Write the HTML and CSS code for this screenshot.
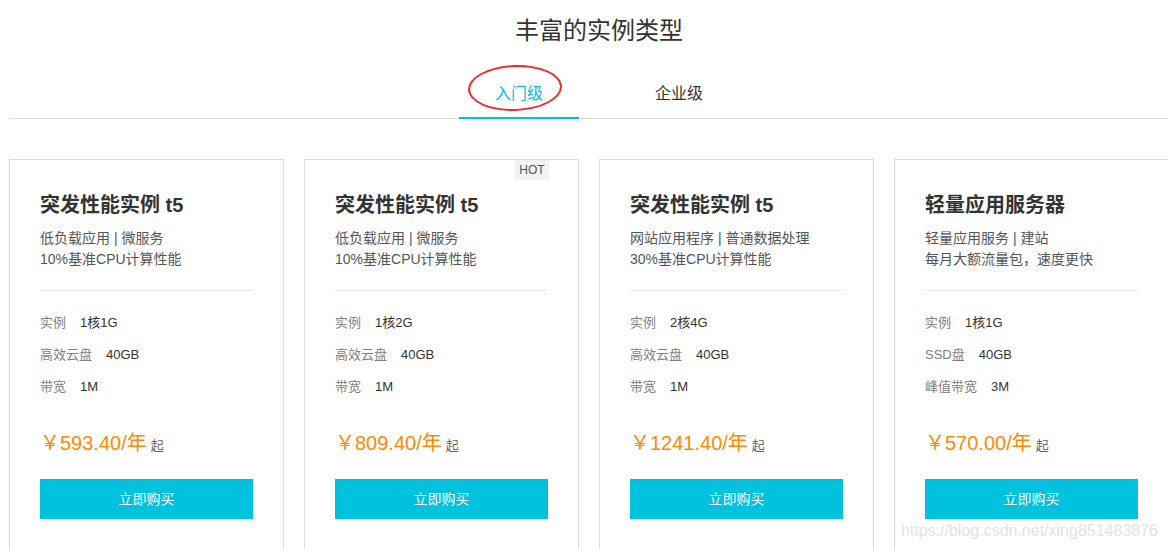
FILE: index.html
```html
<!DOCTYPE html>
<html lang="zh-CN">
<head>
<meta charset="utf-8">
<title>丰富的实例类型</title>
<link rel="stylesheet" href="styles.css">
</head>
<body>
<div class="wrap">
  <h2 class="heading">丰富的实例类型</h2>
  <div class="tabs">
    <div class="tab active">入门级</div>
    <div class="tab">企业级</div>
    <span class="mark"></span>
  </div>
  <div class="cards">
    <div class="card">
      <h3 class="card-title">突发性能实例 t5</h3>
      <p class="desc">低负载应用 | 微服务<br>10%基准CPU计算性能</p>
      <div class="divider"></div>
      <ul class="specs">
        <li><span class="label">实例</span><span class="val">1核1G</span></li>
        <li><span class="label">高效云盘</span><span class="val">40GB</span></li>
        <li><span class="label">带宽</span><span class="val">1M</span></li>
      </ul>
      <div class="price"><span class="yen">￥</span>593.40/年<span class="from">起</span></div>
      <div class="buy">立即购买</div>
    </div>
    <div class="card">
      <span class="hot">HOT</span>
      <h3 class="card-title">突发性能实例 t5</h3>
      <p class="desc">低负载应用 | 微服务<br>10%基准CPU计算性能</p>
      <div class="divider"></div>
      <ul class="specs">
        <li><span class="label">实例</span><span class="val">1核2G</span></li>
        <li><span class="label">高效云盘</span><span class="val">40GB</span></li>
        <li><span class="label">带宽</span><span class="val">1M</span></li>
      </ul>
      <div class="price"><span class="yen">￥</span>809.40/年<span class="from">起</span></div>
      <div class="buy">立即购买</div>
    </div>
    <div class="card">
      <h3 class="card-title">突发性能实例 t5</h3>
      <p class="desc">网站应用程序 | 普通数据处理<br>30%基准CPU计算性能</p>
      <div class="divider"></div>
      <ul class="specs">
        <li><span class="label">实例</span><span class="val">2核4G</span></li>
        <li><span class="label">高效云盘</span><span class="val">40GB</span></li>
        <li><span class="label">带宽</span><span class="val">1M</span></li>
      </ul>
      <div class="price"><span class="yen">￥</span>1241.40/年<span class="from">起</span></div>
      <div class="buy">立即购买</div>
    </div>
    <div class="card">
      <h3 class="card-title">轻量应用服务器</h3>
      <p class="desc">轻量应用服务 | 建站<br>每月大额流量包，速度更快</p>
      <div class="divider"></div>
      <ul class="specs">
        <li><span class="label">实例</span><span class="val">1核1G</span></li>
        <li><span class="label">SSD盘</span><span class="val">40GB</span></li>
        <li><span class="label">峰值带宽</span><span class="val">3M</span></li>
      </ul>
      <div class="price"><span class="yen">￥</span>570.00/年<span class="from">起</span></div>
      <div class="buy">立即购买</div>
    </div>
  </div>
</div>
<div class="watermark">https://blog.csdn.net/xing851483876</div>
</body>
</html>
```
FILE: styles.css
```css
html, body {
  margin: 0;
  padding: 0;
  overflow: hidden;
  background: #fff;
}
body {
  width: 1168px;
  height: 549px;
  position: relative;
  font-family: "Liberation Sans", "Noto Sans CJK SC", sans-serif;
  color: #333;
}
.wrap {
  margin-left: 9px;
  width: 1180px;
}
.heading {
  margin: 14px 0 0;
  font-size: 24px;
  line-height: 34px;
  font-weight: normal;
  text-align: center;
  color: #333;
}
.tabs {
  position: relative;
  margin-top: 23px;
  display: flex;
  justify-content: center;
  gap: 40px;
  border-bottom: 1px solid #dcdcdc;
}
.tab {
  width: 120px;
  height: 46px;
  line-height: 46px;
  text-align: center;
  font-size: 16px;
  color: #333;
  border-bottom: 2px solid transparent;
  margin-bottom: -1px;
}
.tab.active {
  color: #00c1de;
  border-bottom-color: #00c1de;
}
.mark {
  position: absolute;
  left: 459px;
  top: -6px;
  width: 90px;
  height: 42px;
  border: 2px solid #e8312f;
  border-radius: 50%;
  transform: rotate(-2deg);
}
.cards {
  margin-top: 40px;
  display: flex;
  gap: 20px;
}
.card {
  position: relative;
  flex: 0 0 auto;
  width: 213px;
  padding: 30px 30px 40px;
  border: 1px solid #dcdcdc;
}
.hot {
  position: absolute;
  top: 0;
  right: 29px;
  width: 34px;
  height: 20px;
  line-height: 20px;
  text-align: center;
  font-size: 12px;
  color: #555;
  background: #f2f3f4;
}
.card-title {
  margin: 0;
  font-size: 20px;
  line-height: 30px;
  font-weight: bold;
  color: #333;
}
.desc {
  margin: 8px 0 0;
  font-size: 14px;
  line-height: 21px;
  color: #555;
}
.divider {
  margin-top: 20px;
  height: 1px;
  background: #e8e8e8;
}
.specs {
  list-style: none;
  margin: 16px 0 0;
  padding: 0;
}
.specs li {
  height: 32px;
  line-height: 32px;
  font-size: 13px;
}
.label {
  color: #808080;
  margin-right: 14px;
}
.val {
  color: #333;
}
.price {
  margin-top: 24px;
  height: 30px;
  line-height: 30px;
  font-size: 20px;
  color: #ff8a00;
}
.yen {
  font-family: "Noto Sans CJK SC", sans-serif;
  font-size: 20px;
}
.from {
  margin-left: 4px;
  font-size: 13px;
  color: #666;
}
.buy {
  margin-top: 22px;
  height: 40px;
  line-height: 40px;
  background: #00c1de;
  color: #fff;
  text-align: center;
  font-size: 14px;
}
.watermark {
  position: absolute;
  right: 10px;
  bottom: 9px;
  font-size: 16px;
  color: #e3e3e3;
  text-shadow: 0 0 1px #fff;
}
```
